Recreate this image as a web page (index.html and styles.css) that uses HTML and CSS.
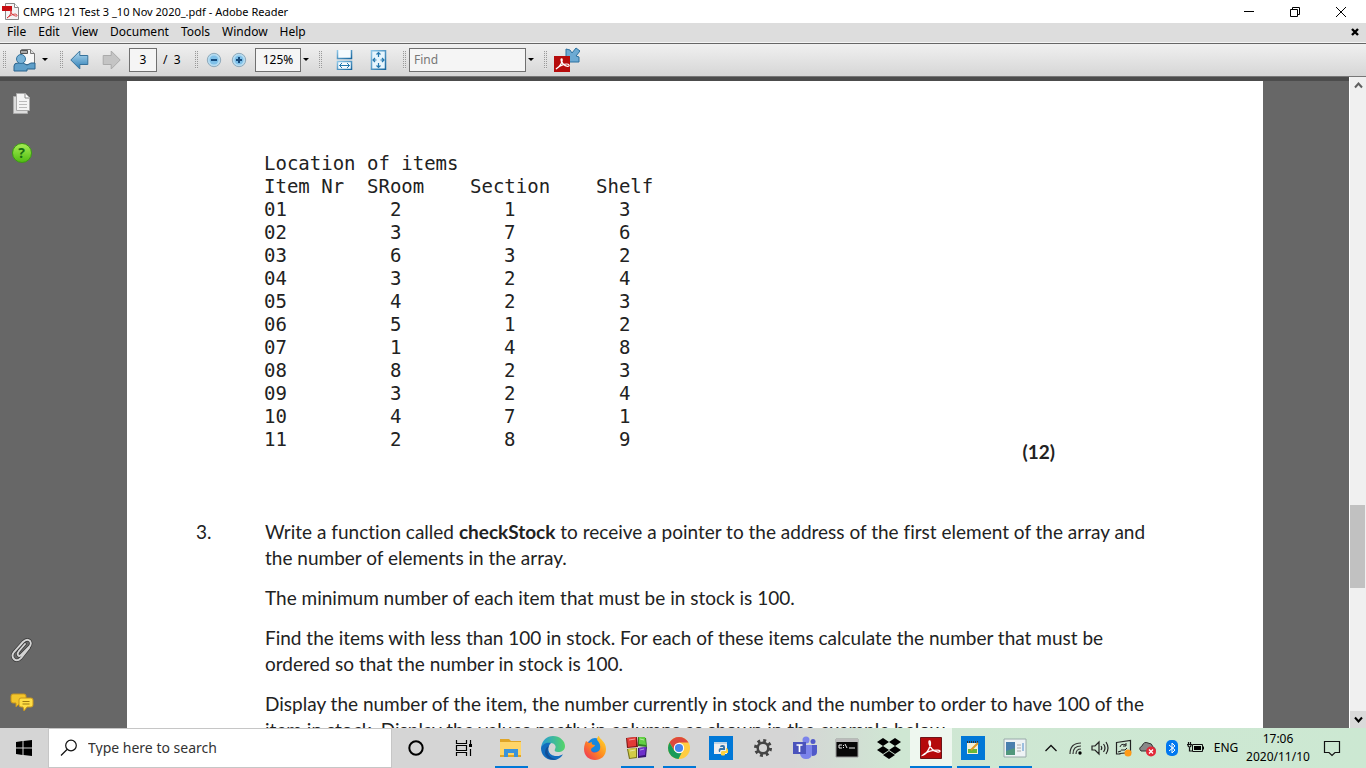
FILE: index.html
```html
<!DOCTYPE html>
<html lang="en">
<head>
<meta charset="utf-8">
<title>CMPG 121 Test 3 _10 Nov 2020_.pdf - Adobe Reader</title>
<link rel="stylesheet" href="styles.css">
</head>
<body>
<header class="titlebar">
  <svg class="app-icon" width="18" height="17" viewBox="0 0 18 17"><path d="M3.500.500h9l4 4v12h-13z" fill="#f4f4f4" stroke="#888"/><path d="M12.500.500v4h4" fill="#fff" stroke="#888"/><path d="M0 3h10v5H0z" fill="#c80d12"/><path d="M5 15c3-2 5-6 4-8-1-1-1 2 1 4s6 3 5 1-6-.500-10 3z" fill="none" stroke="#d9383a"/></svg>
  <h1 class="title">CMPG 121 Test 3 _10 Nov 2020_.pdf - Adobe Reader</h1>
  <button class="win-btn" aria-label="Minimize"><svg width="12" height="12"><path d="M1 5.500h10" stroke="#000"/></svg></button>
  <button class="win-btn" aria-label="Restore"><svg width="12" height="12"><path d="M1.500 3.500h7v7h-7zM3.500 3V1.500h7v7H9" fill="none" stroke="#000"/></svg></button>
  <button class="win-btn" aria-label="Close"><svg width="12" height="12"><path d="M1 1l10 10M11 1L1 11" stroke="#000"/></svg></button>
</header>
<nav class="menubar" aria-label="Application menu">
  <button class="menu">File</button><button class="menu">Edit</button><button class="menu">View</button><button class="menu">Document</button><button class="menu">Tools</button><button class="menu">Window</button><button class="menu">Help</button>
  <button class="doc-close" aria-label="Close document"><svg width="8" height="8"><path d="M1 1l6 6M7 1L1 7" stroke="#000" stroke-width="2.400"/></svg></button>
</nav>
<div class="toolbar" role="toolbar" aria-label="Document tools">
  <div class="group">
    <span class="grip"></span>
    <button class="tool share" aria-label="Collaborate">
      <svg width="24" height="24" viewBox="0 0 24 24"><path d="M8.500 1.500h9l4 4v11h-13z" fill="#f8f8f8" stroke="#777"/><path d="M17.500 1.500v4h4" fill="#ddd" stroke="#777"/><path d="M7.500 2.500h7v3h-7z" fill="#aaa" stroke="#555"/><path d="M1 23v-5q0-3 4-3h5l4 2 4-2h4v6h-8v2z" fill="#5f9fc9" stroke="#2b638c"/><circle cx="8" cy="11" r="4.500" fill="#78b2d7" stroke="#33739d"/></svg>
      <svg width="6" height="4"><path d="M0 0h6L3 3z"/></svg>
    </button>
  </div>
  <div class="group">
    <span class="grip"></span>
    <button class="tool" aria-label="Previous page"><svg width="20" height="20" viewBox="0 0 20 20"><defs><linearGradient id="blue" x2="0" y2="1"><stop stop-color="#b6ddf2"/><stop offset="1" stop-color="#2d7db5"/></linearGradient></defs><path d="M.800 10l9-9v4.500h8v9h-8V19z" fill="url(#blue)" stroke="#37729b"/></svg></button>
    <button class="tool next" aria-label="Next page"><svg width="20" height="20" viewBox="0 0 20 20"><path d="M19.200 10l-9-9v4.500h-8v9h8V19z" fill="#c4c4c4" stroke="#aaa"/></svg></button>
    <input class="field page-no" aria-label="Page number" value="3"><span class="page-total">/&nbsp; 3</span>
  </div>
  <div class="group zoom">
    <span class="grip"></span>
    <button class="tool round" aria-label="Zoom out"><svg width="16" height="16" viewBox="0 0 16 16"><circle cx="8" cy="8" r="6.700" fill="#b6dcf1" stroke="#8fa9ba"/><circle cx="8" cy="8" r="4.500" fill="#7fc0e8"/><path d="M5 8h6" stroke="#164b7c" stroke-width="2"/></svg></button>
    <button class="tool round" aria-label="Zoom in"><svg width="16" height="16" viewBox="0 0 16 16"><circle cx="8" cy="8" r="6.700" fill="#b6dcf1" stroke="#8fa9ba"/><circle cx="8" cy="8" r="4.500" fill="#7fc0e8"/><path d="M5 8h6M8 5v6" stroke="#164b7c" stroke-width="2"/></svg></button>
    <input class="field zoom-level" aria-label="Zoom level" value="125%"><button class="drop" aria-label="Zoom levels"><svg width="6" height="4"><path d="M0 0h6L3 3z"/></svg></button>
  </div>
  <div class="group fit">
    <span class="grip"></span>
    <button class="tool" aria-label="Fit width"><svg width="18" height="20" viewBox="0 0 18 20"><defs><linearGradient id="edge" x2="1" y2="1"><stop stop-color="#8ec7e8"/><stop offset="1" stop-color="#18679f"/></linearGradient></defs><path d="M1.500 0v8.500h14V0" fill="#f6fbfe" stroke="url(#edge)" stroke-width="1.500"/><path d="M1.500 19.500v-8h14v8z" fill="#f6fbfe" stroke="url(#edge)" stroke-width="1.500"/><path d="M3.500 15.500h10M6 13l-2.500 2.500L6 18M11 13l2.500 2.500L11 18" fill="none" stroke="#2377ae"/></svg></button>
    <button class="tool" aria-label="Fit page"><svg width="18" height="20" viewBox="0 0 18 20"><path d="M1.500.800h14v18.500h-14z" fill="#e6f5fd" stroke="url(#edge)" stroke-width="1.500"/><path d="M8.500 7V2.500M6.500 4.500l2-2 2 2M8.500 13v4.500M6.500 15.500l2 2 2-2M6.500 10H3M5 8l-2 2 2 2M10.500 10H14M12 8l2 2-2 2" fill="none" stroke="#2377ae" stroke-width="1.200"/></svg></button>
  </div>
  <div class="group">
    <span class="grip"></span>
    <input class="field find" aria-label="Find" placeholder="Find"><button class="drop" aria-label="Find options"><svg width="6" height="4"><path d="M0 0h6L3 3z"/></svg></button>
  </div>
  <div class="group reader">
    <span class="grip"></span>
    <button class="tool" aria-label="Adobe Reader"><svg width="28" height="26" viewBox="0 0 28 26"><path d="M14 2l4 1 2 3 4-5 4 3-4 5 3 1v5H16l-2-4z" fill="#6caad3" stroke="#2c719f"/><path d="M2 9h16v16H2z" fill="#b60c0c"/><path d="M4 22c4-2 7-8 6-10-1-1-2 2 1 5s7 3 6 1-8-1-13 4z" fill="none" stroke="#fff" stroke-width="1.200"/></svg></button>
  </div>
</div>
<main class="workspace">
  <aside class="nav-pane">
    <button class="pane-btn" aria-label="Pages"><svg width="22" height="24" viewBox="0 0 22 24"><path d="M2.500 4.500h14v17h-14z" fill="#ddd" stroke="#aaa"/><path d="M5.500 1.500h9l4 4v13h-13z" fill="#f5f5f5" stroke="#aaa"/><path d="M14 2v4h4" fill="#fff" stroke="#888"/><path d="M8 9.500h8M8 12.500h8M8 15.500h8" stroke="#bbb"/></svg></button>
    <button class="pane-btn help" aria-label="Help">?</button>
    <button class="pane-btn clip" aria-label="Attachments"><svg width="22" height="24" viewBox="0 0 22 24"><g fill="none" stroke-linecap="round"><path d="M18 10l-8 10q-4 4-7 1-3-3 0-7L12 4q4-4 7-1 2 3-1 6L10 17q-2 2-3 0-1-1 1-4l6-7" stroke="#333" stroke-width="3.200"/><path d="M18 10l-8 10q-4 4-7 1-3-3 0-7L12 4q4-4 7-1 2 3-1 6L10 17q-2 2-3 0-1-1 1-4l6-7" stroke="#d4d4d4" stroke-width="1.900"/></g></svg></button>
    <button class="pane-btn" aria-label="Comments"><svg width="24" height="20" viewBox="0 0 24 20"><path d="M3 2h11q2 0 2 2v5q0 2-2 2h-4l-4 4v-4H3q-2 0-2-2V4q0-2 2-2z" fill="#f3c52b" stroke="#c6951e"/><path d="M11 6h10q2 0 2 2v5q0 2-2 2h-4l-3 4-1-4h-2q-2 0-2-2V8q0-2 2-2z" fill="#ffde45" stroke="#c6951e"/><path d="M12.500 9.500h7M12.500 12h7" stroke="#9e7a11"/></svg></button>
  </aside>
  <section class="viewer">
    <article class="page">
      <table class="items">
        <caption>Location of items</caption>
        <thead><tr><th>Item Nr</th><th>SRoom</th><th>Section</th><th>Shelf</th></tr></thead>
        <tbody>
          <tr><td>01</td><td>2</td><td>1</td><td>3</td></tr>
          <tr><td>02</td><td>3</td><td>7</td><td>6</td></tr>
          <tr><td>03</td><td>6</td><td>3</td><td>2</td></tr>
          <tr><td>04</td><td>3</td><td>2</td><td>4</td></tr>
          <tr><td>05</td><td>4</td><td>2</td><td>3</td></tr>
          <tr><td>06</td><td>5</td><td>1</td><td>2</td></tr>
          <tr><td>07</td><td>1</td><td>4</td><td>8</td></tr>
          <tr><td>08</td><td>8</td><td>2</td><td>3</td></tr>
          <tr><td>09</td><td>3</td><td>2</td><td>4</td></tr>
          <tr><td>10</td><td>4</td><td>7</td><td>1</td></tr>
          <tr><td>11</td><td>2</td><td>8</td><td>9</td></tr>
        </tbody>
      </table>
      <strong class="marks">(12)</strong>
      <div class="question">
        <span>3.</span>
        <div class="answer">
          <p>Write a function called <b>checkStock</b> to receive a pointer to the address of the first element of the array and<br>the number of elements in the array.</p>
          <p>The minimum number of each item that must be in stock is 100.</p>
          <p>Find the items with less than 100 in stock. For each of these items calculate the number that must be<br>ordered so that the number in stock is 100.</p>
          <p>Display the number of the item, the number currently in stock and the number to order to have 100 of the<br>item in stock. Display the values neatly in columns as shown in the example below.</p>
        </div>
      </div>
    </article>
  </section>
  <div class="scrollbar">
    <button class="scroll-btn" aria-label="Scroll up"><svg width="9" height="7"><path d="M1 5.500l3.500-4 3.500 4" fill="none" stroke="#606060" stroke-width="2"/></svg></button>
    <div class="track"><div class="thumb"></div></div>
    <button class="scroll-btn down" aria-label="Scroll down"><svg width="9" height="7"><path d="M1 1.500l3.500 4 3.500-4" fill="none" stroke="#000" stroke-width="2"/></svg></button>
  </div>
</main>
<footer class="taskbar">
  <button class="start" aria-label="Start"><svg width="16" height="16" viewBox="0 0 16 16"><path d="M0 2l6.500-1v6.500H0zM7.500 1L16 0v7.500H7.500zM0 8.500h6.500V15L0 14zM7.500 8.500H16V16l-8.500-1z"/></svg></button>
  <label class="search"><svg width="18" height="18" viewBox="0 0 18 18"><circle cx="11" cy="6.500" r="5.300" fill="none" stroke="#111" stroke-width="1.200"/><path d="M7 10.500L1 16.500" stroke="#111" stroke-width="1.300"/></svg><input aria-label="Search" placeholder="Type here to search"></label>
  <button class="task wide" aria-label="Cortana"><svg width="24" height="24"><circle cx="12" cy="12" r="6.700" fill="none" stroke="#000" stroke-width="2"/></svg></button>
  <button class="task wide" aria-label="Task view"><svg width="24" height="24"><path d="M4.500 4v3.500h10V4M4.500 20v-3.500h10V20M4.500 9.500h10v5h-10zM18.500 4v4M18.500 13v7" fill="none" stroke="#000" stroke-width="1.200"/><path d="M17 8h3v3h-3z"/></svg></button>
  <div class="apps">
    <button class="task open" aria-label="File Explorer"><svg width="24" height="24"><path d="M1 3h9l2 2h10v16H1z" fill="#e0a526"/><path d="M1 6h21v13H1z" fill="#ffd568"/><path d="M5 21v-8h14v8h-4v-4H9v4z" fill="#3b93da"/></svg></button>
    <button class="task" aria-label="Edge"><svg width="24" height="24"><defs><linearGradient id="eg" x2="1"><stop stop-color="#259ad6"/><stop offset="1" stop-color="#55d568"/></linearGradient></defs><path d="M0 12C1 4 6 0 12 0c7 0 12 5 12 10 0 4-3 6-7 6-3 0-4-1-3-3 2-3-1-6-4-6C5 7 1 9 0 12z" fill="url(#eg)"/><path d="M0 12c1-4 6-6 10-5-4 3-4 12 4 13 4 .500 7-1 8-2-2 4-6 6-10 6C4 24 0 18 0 12z" fill="#116cbe"/><path d="M8 10c-4 7 1 13 8 13-5 2-11-.500-12-6 0-3 1-6 4-7z" fill="#124f98"/></svg></button>
    <button class="task" aria-label="Firefox"><svg width="24" height="24"><defs><linearGradient id="ff" x1="1" x2="0" y2="1"><stop stop-color="#ffe22f"/><stop offset=".5" stop-color="#ff8b20"/><stop offset="1" stop-color="#ed2761"/></linearGradient></defs><circle cx="12" cy="13" r="10" fill="#6444cc"/><circle cx="12" cy="9" r="7" fill="#1687dc"/><path d="M3 5l3 2 3-1c-1 2 0 3 3 3-1 3-4 2-4 5 1 4 8 3 9-1 1-4-1-7-3-9 0-2 1-4 2-4 0 3 7 5 7 13 0 7-5 11-11 11S1 20 1 13c0-3 1-6 2-8z" fill="url(#ff)"/></svg></button>
    <button class="task open" aria-label="Code::Blocks"><svg width="24" height="24"><path d="M1 2l11-1 1 10-11 1z" fill="#7d1715"/><path d="M2 2l9-1v9l-8 1z" fill="#e23a36"/><path d="M13 1l8 1 1 9-9-1z" fill="#2f7d22"/><path d="M14 1h6l1 8-7-1z" fill="#62d043"/><path d="M2 13l10-1v10l-8 1z" fill="#77731a"/><path d="M3 13l8-1v9l-6 1z" fill="#d2cd48"/><path d="M13 12l9-1-1 10-8 1z" fill="#351573"/><path d="M14 12l7-1-1 8-6 1z" fill="#6d2fcb"/><path d="M4 4l6-1M15 3l4 1M5 15l5-1M15 14l4-1" stroke="#fff" opacity=".5"/></svg></button>
    <button class="task open" aria-label="Chrome"><svg width="24" height="24"><circle cx="12" cy="12" r="11" fill="#ffcd42"/><path d="M2.500 6.500A11 11 0 0 1 21.500 6.500H12L7 14z" fill="#de493d"/><path d="M2.500 6.500l5 8.500 7 2-3 6A11 11 0 0 1 2.500 6.500z" fill="#189b59"/><circle cx="12" cy="12" r="5.200" fill="#fff"/><circle cx="12" cy="12" r="4.100" fill="#4786ee"/></svg></button>
    <button class="task" aria-label="Python IDLE"><svg width="24" height="24"><path d="M0 0h24v24H0z" fill="#0078d7"/><path d="M5 6h13v12H5z" fill="#eee"/><path d="M5 6h13v2H5z" fill="#bed4e3"/><path d="M11 11q0-2 2-2h1q2 0 2 2v3h-4q-1 0-1 2h-1q-1-3 1-4h3v-1z" fill="#3776ab"/><path d="M17 12h1q2 2 1 5h-3v2q-2 1-4 0v-3q0-1 2-1h3z" fill="#ffd342"/></svg></button>
    <button class="task" aria-label="Settings"><svg width="24" height="24"><circle cx="12" cy="12" r="7.500" fill="none" stroke="#444" stroke-width="3" stroke-dasharray="2.900 2.990"/><circle cx="12" cy="12" r="5.300" fill="none" stroke="#444" stroke-width="2.500"/></svg></button>
    <button class="task" aria-label="Teams"><svg width="24" height="24"><circle cx="13" cy="4" r="3.500" fill="#7b83eb"/><circle cx="20" cy="5.500" r="2.500" fill="#5059c9"/><path d="M16 9h8v7q0 4-5 4z" fill="#5059c9"/><path d="M7 9h12v8q0 6-6 6-5 0-6-5z" fill="#7b83eb"/><path d="M0 6h13v12H0z" fill="#4b53bc"/><path d="M3.500 9h6M6.500 9v7" stroke="#fff" stroke-width="1.700"/></svg></button>
    <button class="task" aria-label="Command Prompt"><svg width="24" height="20"><path d="M1 1h22v18H1z" fill="#080808" stroke="#999"/><path d="M1 1h22v3H1z" fill="#bbb"/><path d="M7 7H4v3h3M8.500 7v1M8.500 9v1M10 6l2 4M14 10h6" fill="none" stroke="#eee"/></svg></button>
    <button class="task" aria-label="Dropbox"><svg width="24" height="22"><path d="M6 1l6 4-6 4-6-4zM18 1l6 4-6 4-6-4zM6 9l6 4-6 4-6-4zM18 9l6 4-6 4-6-4zM12 14l6 4-6 4-6-4z"/></svg></button>
    <button class="task open active" aria-label="Adobe Reader"><svg width="24" height="24"><path d="M1.500 1.500h21v21h-21z" fill="#b50a0c" stroke="#6e1518"/><path d="M4 19c4-1 9-10 7-14-2-1-1 5 2 8s8 4 8 2-12-1-17 4z" fill="none" stroke="#fff" stroke-width="1.300"/></svg></button>
    <button class="task open" aria-label="Notepad"><svg width="24" height="24"><path d="M0 0h24v24H0z" fill="#0078d7"/><path d="M6 7h11v11H6z" fill="#f4f0d8"/><path d="M6 6h11" stroke="#333" stroke-width="2" stroke-dasharray="1 1"/><path d="M7 13h9v4H7z" fill="#68b73b"/><path d="M10 14l7-7" stroke="#e09a24" stroke-width="2"/></svg></button>
    <button class="task open" aria-label="Console application"><svg width="24" height="22"><path d="M1 2h22v18H1z" fill="#eef3f5" stroke="#9aa"/><path d="M3 5h9v13H3z" fill="#50977c"/><path d="M3 5h9v6l-9 3z" fill="#497fae"/><path d="M14 8h4M14 11h4M14 14h4" stroke="#aaa"/><path d="M20 6v8" stroke="#4b8bc8"/></svg></button>
  </div>
  <div class="tray">
    <button class="tray-btn chevron" aria-label="Show hidden icons"><svg width="14" height="10"><path d="M1.500 8L7 2.500 12.500 8" fill="none" stroke="#111" stroke-width="1.300"/></svg></button>
    <button class="tray-btn" aria-label="Wi-Fi"><svg width="16" height="16"><path d="M2 14Q2 3 13 3M5 14Q5 6 13 6M8 14Q8 9 13 9" fill="none" stroke="#333" stroke-width="1.200"/><circle cx="12" cy="13" r="1.700"/></svg></button>
    <button class="tray-btn" aria-label="Volume"><svg width="18" height="16"><path d="M1 6h3l4-4v12l-4-4H1zM10 6q1.500 2 0 4M12.500 4q3 4 0 8M15 2q4 6 0 12" fill="none" stroke="#222" stroke-width="1.200"/></svg></button>
    <button class="tray-btn" aria-label="Updates"><svg width="18" height="18"><path d="M1.500 3.500l14-2v12l-11 1M1.500 3v12h4M3 13l3-1" fill="none" stroke="#222" stroke-width="1.200"/><path d="M5 8q1-4 6-2M11 4v3H8M12 9q-1 3-6 2" fill="none" stroke="#222"/><circle cx="13" cy="14" r="3.500" fill="#ff9a16"/></svg></button>
    <button class="tray-btn" aria-label="Cloud sync error"><svg width="18" height="18"><path d="M2 12q-3-3 1-5 2-5 6-3 4 0 5 4 3 1 2 4z" fill="#888" stroke="#333"/><circle cx="12" cy="12.500" r="5" fill="#e32938"/><path d="M10 10.500l4 4M14 10.500l-4 4" stroke="#fff" stroke-width="1.300"/></svg></button>
    <button class="tray-btn" aria-label="Bluetooth"><svg width="12" height="16"><rect width="12" height="16" rx="5" fill="#0078f0"/><path d="M3 5l6 5-3 3V3l3 3-6 5" fill="none" stroke="#fff"/></svg></button>
    <button class="tray-btn" aria-label="Battery"><svg width="18" height="16"><path d="M5.500 4.500h10v7h-10z" fill="none" stroke="#111"/><path d="M7 6h7v4H7zM16 6.500h1v3h-1z"/><path d="M0 4.500h5M1.500 2v2M3.500 2v2M1 5q0 2 1.500 2T4 5M2.500 7v4H5" fill="none" stroke="#111" stroke-width="1.200"/></svg></button>
    <button class="lang">ENG</button>
    <button class="clock"><span>17:06</span><span>2020/11/10</span></button>
    <button class="notify" aria-label="Notifications"><svg width="18" height="18"><path d="M1.500 2.500h15v11H12l-3 3-3-3H1.500z" fill="none" stroke="#111" stroke-width="1.200"/></svg></button>
  </div>
</footer>
</body>
</html>
```
FILE: styles.css
```css
* { box-sizing: border-box; }
body {
  margin: 0;
  height: 100vh;
  display: flex;
  flex-direction: column;
  overflow: hidden;
  font: 12px/16px "Noto Sans", "Open Sans", sans-serif;
  color: #000;
}
button, input { font: inherit; color: inherit; margin: 0; padding: 0; border: 0; background: none; }
button { display: flex; align-items: center; justify-content: center; flex: none; }
input { min-width: 0; }
svg { display: block; flex: none; }

.titlebar { flex: none; display: flex; align-items: center; height: 23px; padding: 0 2px; background: #fff; }
.title { flex: 1; margin: 0 0 0 3px; font-size: 11px; font-weight: 400; white-space: nowrap; }
.win-btn { width: 46px; height: 20px; }

.menubar { flex: none; display: flex; height: 20px; padding: 0 7px 2px 1px; background: #ddd; border-bottom: 1px solid #f4f4f4; }
.menu { padding: 0 6px; }
.doc-close { margin-left: auto; }

.toolbar {
  flex: none; display: flex; gap: 5px; height: 34px; padding-bottom: 1px;
  background: linear-gradient(#f0f0f0, #d6d6d6);
  border-top: 1px solid #666; border-bottom: 1px solid #777;
}
.group { display: flex; align-items: center; }
.grip {
  width: 3px; height: 18px; margin: 0 3px;
  background:
    linear-gradient(transparent 50%, #e3e3e3 50%) 0 0 / 2px 2px,
    linear-gradient(90deg, #999 50%, transparent 50%) 0 0 / 2px 2px;
}
.tool { width: 28px; height: 28px; }
.share { width: 43px; gap: 5px; }
.next { margin: 0 4px 0 3px; }
.round { width: 25px; }
.field { height: 24px; border: 1px solid #707070; background: #f5f5f5; }
.page-no { width: 28px; text-align: center; }
.page-total { width: 24px; margin-left: 6px; }
.zoom-level { width: 46px; margin-left: 4px; text-align: center; }
.drop { width: 10px; height: 24px; }
.fit { gap: 6px; margin-right: 2px; }
.find { width: 117px; padding: 0 4px; }
.find::placeholder { color: #777; opacity: 1; }
.reader { gap: 2px; }

.workspace { flex: 1; min-height: 0; display: flex; background: #676767; border-top: 4px solid #4c4c4c; }
.nav-pane { width: 41px; flex: none; display: flex; flex-direction: column; align-items: center; gap: 26px; padding: 10px 0 13px 2px; }
.pane-btn { width: 26px; height: 26px; }
.help { width: 20px; height: 20px; border: 1px solid #3c9e11; border-radius: 50%; background: linear-gradient(#a6ed54, #51bd12); color: #176d12; font: bold 14px/18px "Open Sans", sans-serif; }
.clip { margin-top: auto; }
.viewer { flex: 1; min-width: 0; padding: 0 86px; overflow: hidden; }
.page { min-height: 100%; padding: 71px 83px 0 69px; background: #fff; color: #222; font: 19px/26px Lato, "Open Sans", sans-serif; font-variant-ligatures: none; }
.items { margin-left: 68px; border-collapse: collapse; table-layout: fixed; width: 390px; font: 19px/23px "DejaVu Sans Mono", monospace; }
.items caption { text-align: left; }
.items th, .items td { padding: 0; text-align: left; font-weight: 400; white-space: nowrap; }
.items th:nth-child(1), .items th:nth-child(2) { width: 103px; }
.items th:nth-child(3) { width: 126px; }
.items td:nth-child(2), .items td:nth-child(4) { padding-left: 23px; }
.items td:nth-child(3) { padding-left: 34px; }
.marks { display: block; margin: -12px 125px 54px 0; text-align: right; }
.question { display: grid; grid-template-columns: 69px 1fr; }
.answer p { margin: 0 0 14px; white-space: nowrap; }

.scrollbar { width: 17px; flex: none; display: flex; flex-direction: column; margin-top: -4px; background: #f0f0f0; border-left: 1px solid #fff; }
.scroll-btn { height: 17px; }
.down { background: #dadada; }
.track { flex: 1; display: grid; grid-template-rows: 411fr 83fr 123fr; }
.thumb { grid-row: 2; background: #c1c1c1; margin-right: 1px; }

.taskbar { flex: none; display: flex; height: 40px; background: linear-gradient(90deg, #d5d5d5 58%, #cfe7d3 66%, #cce8d2); }
.start { width: 48px; }
.search { display: flex; align-items: center; flex: 0 1 344px; gap: 10px; padding-left: 11px; background: #fff; border: 1px solid #c6c6c6; }
.search input { flex: 1; font-size: 14px; }
.search input::placeholder { color: #333; opacity: 1; }
.task { width: 42px; border-bottom: 3px solid transparent; border-top: 3px solid transparent; }
.wide { width: 48px; }
.apps { display: flex; padding-left: 2px; }
.open { background: linear-gradient(#0078d7, #0078d7) center bottom / 33px 2px no-repeat border-box; }
.active { background: linear-gradient(#0078d7, #0078d7) center bottom / 42px 2px no-repeat border-box, #eef7ef; }
.tray { flex: 1; display: flex; align-items: center; padding-left: 2px; }
.tray-btn { width: 24px; height: 40px; }
.chevron { width: 26px; }
.lang { width: 36px; height: 40px; }
.clock { width: 68px; flex-direction: column; line-height: 18px; }
.notify { width: 40px; height: 40px; }
```
